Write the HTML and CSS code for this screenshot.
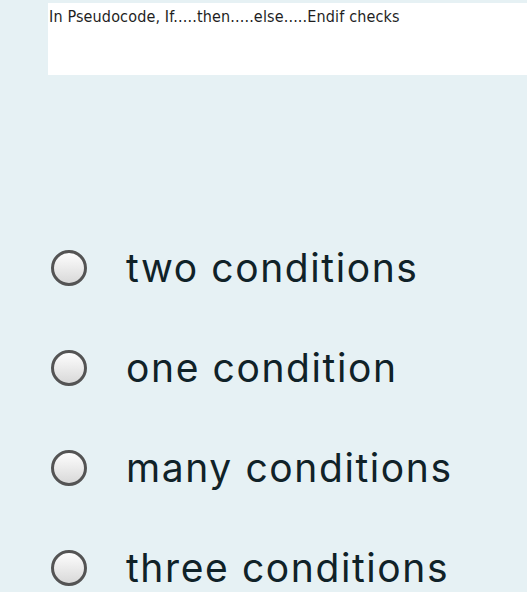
FILE: index.html
```html
<!DOCTYPE html>
<html>
<head>
<meta charset="utf-8">
<link rel="stylesheet" href="styles.css">
</head>
<body>
<div class="page">
  <div class="question">In Pseudocode, If.....then.....else.....Endif checks</div>
  <ul class="options">
    <li class="option"><span class="radio"></span><span class="label">two conditions</span></li>
    <li class="option"><span class="radio"></span><span class="label">one condition</span></li>
    <li class="option"><span class="radio"></span><span class="label">many conditions</span></li>
    <li class="option"><span class="radio"></span><span class="label">three conditions</span></li>
  </ul>
</div>
</body>
</html>
```
FILE: styles.css
```css
html, body {
  margin: 0;
  padding: 0;
  background: #e6f1f4;
  overflow: hidden;
}
.page {
  width: 527px;
  height: 592px;
  padding-top: 3px;
  box-sizing: border-box;
}
.question {
  margin-left: 48px;
  height: 72px;
  background: #ffffff;
  box-sizing: border-box;
  padding: 5px 0 0 1px;
  font-family: "DejaVu Sans Condensed", "DejaVu Sans", sans-serif;
  font-size: 16px;
  letter-spacing: 0.15px;
  color: #1e1e1e;
  line-height: 18px;
}
.options {
  list-style: none;
  margin: 0;
  padding: 175px 0 0 51px;
  display: flex;
  flex-direction: column;
  gap: 64px;
}
.option {
  display: flex;
  align-items: center;
  height: 36px;
}
.radio {
  width: 36px;
  height: 36px;
  box-sizing: border-box;
  border-radius: 50%;
  border: 3px solid #545454;
  background: linear-gradient(#fdfdfd, #d9d9d9);
  flex: none;
}
.label {
  margin-left: 39px;
  font-family: Inter, "Liberation Sans", sans-serif;
  font-size: 39px;
  letter-spacing: 1.6px;
  color: #102228;
  line-height: 36px;
}
```
